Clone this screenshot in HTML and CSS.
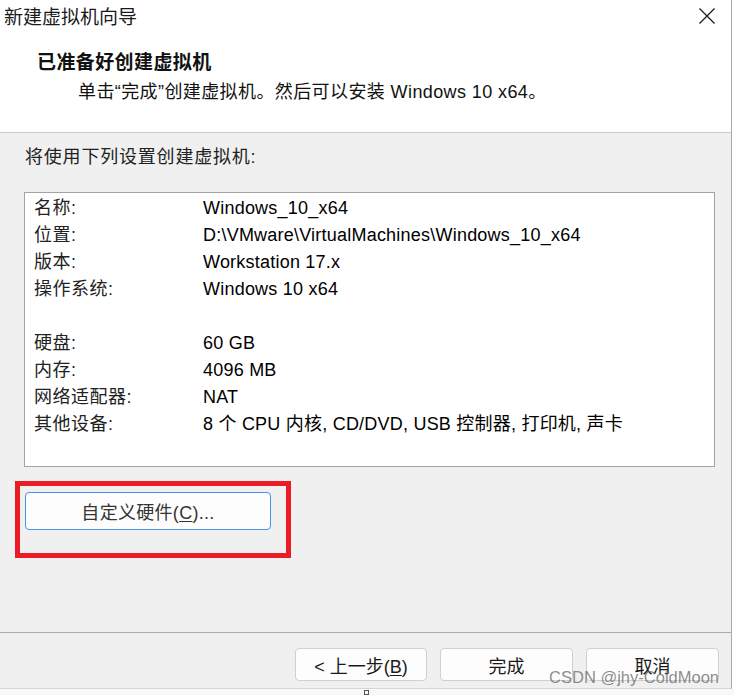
FILE: index.html
```html
<!DOCTYPE html>
<html lang="zh-CN">
<head>
<meta charset="utf-8">
<title>新建虚拟机向导</title>
<link rel="stylesheet" href="styles.css">
</head>
<body>
<div class="window">
  <div class="titlebar">
    <span class="title">新建虚拟机向导</span>
    <svg class="close" width="16" height="16" viewBox="0 0 16 16" aria-hidden="true">
      <path d="M0.5 0.5 L15.5 15.5 M15.5 0.5 L0.5 15.5" stroke="#1b1b1b" stroke-width="1.3" fill="none"/>
    </svg>
  </div>
  <div class="header">
    <div class="heading">已准备好创建虚拟机</div>
    <div class="subtitle">单击“完成”创建虚拟机。然后可以安装 Windows 10 x64。</div>
  </div>
  <div class="content">
    <div class="intro">将使用下列设置创建虚拟机:</div>
    <div class="summary">
      <div class="row"><span class="label">名称:</span><span class="value">Windows_10_x64</span></div>
      <div class="row"><span class="label">位置:</span><span class="value">D:\VMware\VirtualMachines\Windows_10_x64</span></div>
      <div class="row"><span class="label">版本:</span><span class="value">Workstation 17.x</span></div>
      <div class="row"><span class="label">操作系统:</span><span class="value">Windows 10 x64</span></div>
      <div class="row"></div>
      <div class="row"><span class="label">硬盘:</span><span class="value">60 GB</span></div>
      <div class="row"><span class="label">内存:</span><span class="value">4096 MB</span></div>
      <div class="row"><span class="label">网络适配器:</span><span class="value">NAT</span></div>
      <div class="row"><span class="label">其他设备:</span><span class="value">8 个 CPU 内核, CD/DVD, USB 控制器, 打印机, 声卡</span></div>
    </div>
    <button class="btn btn-custom">自定义硬件(<u>C</u>)...</button>
  </div>
  <div class="footer">
    <button class="btn btn-back">&lt; 上一步(<u>B</u>)</button>
    <button class="btn btn-nav">完成</button>
    <button class="btn btn-nav">取消</button>
  </div>
  <div class="highlight"></div>
  <div class="watermark">CSDN @jhy-ColdMoon</div>
</div>
<div class="below"><span class="grip"></span></div>
</body>
</html>
```
FILE: styles.css
```css
* { box-sizing: border-box; }

html, body {
  margin: 0;
  padding: 0;
  background: #ffffff;
}

body {
  width: 734px;
  height: 695px;
  overflow: hidden;
  font-family: "Liberation Sans", "Noto Sans CJK SC", sans-serif;
  font-size: 18px;
  color: #111;
}

.window {
  position: relative;
  width: 732px;
  background: #f0f0f0;
  border-right: 1px solid #aaaaaa;
  border-bottom: 1px solid #d6d6d6;
}

.titlebar {
  height: 32px;
  background: #ffffff;
  display: flex;
  align-items: center;
  justify-content: space-between;
  padding: 0 16px 0 4px;
}

.title {
  font-family: "Noto Sans CJK SC", sans-serif;
  font-size: 19px;
  line-height: 32px;
  color: #1a1a1a;
}

.close { display: block; }

.header {
  height: 101px;
  background: #ffffff;
  border-bottom: 1px solid #c9c9c9;
  padding: 16px 0 0 37px;
}

.heading {
  font-family: "Noto Sans CJK SC", sans-serif;
  font-weight: bold;
  font-size: 19px;
  line-height: 26px;
  letter-spacing: 0.4px;
  color: #111;
}

.subtitle {
  margin-top: 5px;
  padding-left: 41px;
  line-height: 26px;
  letter-spacing: 0.4px;
  color: #111;
}

.content {
  height: 500px;
  border-bottom: 1px solid #a9a9a9;
  padding: 12px 0 0 24px;
}

.intro {
  line-height: 24px;
  padding-left: 1px;
  letter-spacing: 0.8px;
  color: #222;
}

.summary {
  margin-top: 23px;
  width: 691px;
  height: 275px;
  background: #ffffff;
  border: 1px solid #a3a3a3;
  padding: 2px 0 0 9px;
}

.row {
  display: flex;
  height: 27px;
  line-height: 27px;
}

.label {
  width: 169px;
  letter-spacing: 0.5px;
  color: #222;
}

.value {
  letter-spacing: 0.22px;
  color: #000;
}

.btn {
  font-family: "Liberation Sans", "Noto Sans CJK SC", sans-serif;
  font-size: 18px;
  color: #1a1a1a;
  background: #fdfdfd;
  border: 1px solid #d0d0d0;
  border-radius: 4px;
  padding: 0;
  margin: 0;
}

.btn u { text-underline-offset: 2px; }

.btn-custom {
  display: block;
  margin: 25px 0 0 1px;
  width: 246px;
  height: 38px;
  border-color: #4a94dc;
  letter-spacing: 0.3px;
  color: #333;
}

.footer {
  height: 55px;
  display: flex;
  justify-content: flex-end;
  align-items: flex-start;
  gap: 13px;
  padding: 15px 12px 0 0;
}

.btn-back { width: 132px; height: 33px; }
.btn-nav { width: 133px; height: 33px; }

.highlight {
  position: absolute;
  left: 15px;
  top: 481px;
  width: 276px;
  height: 77px;
  border: 5px solid #ec1c24;
}

.watermark {
  position: absolute;
  right: 12px;
  top: 666px;
  font-family: "Liberation Sans", sans-serif;
  font-size: 16.5px;
  line-height: 22px;
  color: rgba(110, 110, 110, 0.8);
}

.below {
  height: 6px;
  background: #f8f8f8;
  position: relative;
}

.grip {
  position: absolute;
  left: 364px;
  top: 1px;
  width: 5px;
  height: 5px;
  border: 1px solid #555;
}
```
